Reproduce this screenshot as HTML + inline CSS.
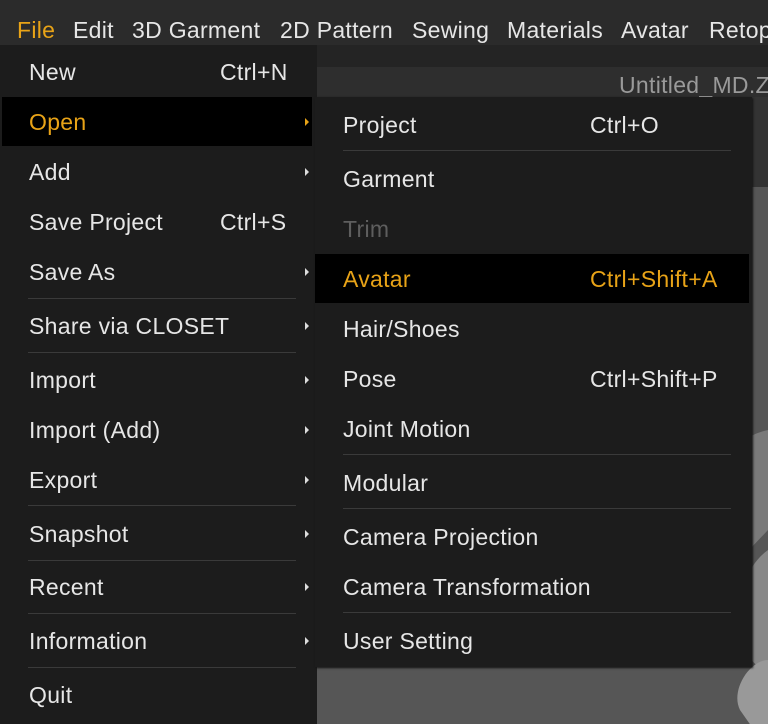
<!DOCTYPE html>
<html><head><meta charset="utf-8"><style>
html,body{margin:0;width:768px;height:724px;overflow:hidden}
body{background:#565656;font-family:"Liberation Sans",sans-serif;position:relative}
.a{position:absolute}
.t{position:absolute;font-size:23px;color:#e6e6e6;line-height:26px;white-space:nowrap;letter-spacing:0.3px}
.o{color:#e8a317}
.sep{position:absolute;height:1px;background:#3a3a3a}
.ar{position:absolute;width:0;height:0;border-left:4px solid #ddd;border-top:4px solid transparent;border-bottom:4px solid transparent}
</style></head><body>
<div class="a" style="left:0;top:0;width:768px;height:45px;background:#2b2b2b"></div>
<div class="a" style="left:0;top:45px;width:768px;height:22px;background:#242424"></div>
<div class="a" style="left:0;top:67px;width:768px;height:30px;background:#2e2e2e"></div>
<div class="a" style="left:740px;top:97px;width:28px;height:90px;background:#333"></div>
<svg class="a" style="left:700px;top:190px" width="68" height="534"><path d="M68 360 C40 380 30 430 45 460 C55 480 68 480 68 480Z" fill="#888"/><path d="M68 560 L40 520 C30 500 50 470 68 470Z" fill="#999"/><path d="M30 380 C15 300 20 250 68 240 L68 340Z" fill="#7a7a7a"/></svg>
<div class="a" style="left:0;top:0;width:768px;height:45px;overflow:hidden">
<div class="t o" style="left:17px;top:17px">File</div>
<div class="t" style="left:73px;top:17px">Edit</div>
<div class="t" style="left:132px;top:17px">3D Garment</div>
<div class="t" style="left:280px;top:17px">2D Pattern</div>
<div class="t" style="left:412px;top:17px">Sewing</div>
<div class="t" style="left:507px;top:17px">Materials</div>
<div class="t" style="left:621px;top:17px">Avatar</div>
<div class="t" style="left:709px;top:17px">Retop</div>
</div>
<div class="a" style="left:0;top:60px;width:768px;height:37px;overflow:hidden">
<div class="t" style="left:619px;top:12px;color:#9a9a9a">Untitled_MD.ZP</div>
</div>

<div class="a" style="left:0;top:45px;width:317px;height:679px;background:#1c1c1c"></div>
<div class="a" style="left:2px;top:97px;width:310px;height:49px;background:#000"></div>
<div class="t" style="left:29px;top:59px">New</div><div class="t" style="left:220px;top:59px">Ctrl+N</div>
<div class="t o" style="left:29px;top:109px">Open</div>
<div class="t" style="left:29px;top:159px">Add</div>
<div class="t" style="left:29px;top:209px">Save Project</div><div class="t" style="left:220px;top:209px">Ctrl+S</div>
<div class="t" style="left:29px;top:259px">Save As</div>
<div class="sep" style="left:28px;top:298px;width:268px"></div>
<div class="t" style="left:29px;top:313px">Share via CLOSET</div>
<div class="sep" style="left:28px;top:352px;width:268px"></div>
<div class="t" style="left:29px;top:367px">Import</div>
<div class="t" style="left:29px;top:417px">Import (Add)</div>
<div class="t" style="left:29px;top:467px">Export</div>
<div class="sep" style="left:28px;top:505px;width:268px"></div>
<div class="t" style="left:29px;top:521px">Snapshot</div>
<div class="sep" style="left:28px;top:560px;width:268px"></div>
<div class="t" style="left:29px;top:574px">Recent</div>
<div class="sep" style="left:28px;top:613px;width:268px"></div>
<div class="t" style="left:29px;top:628px">Information</div>
<div class="sep" style="left:28px;top:667px;width:268px"></div>
<div class="t" style="left:29px;top:682px">Quit</div>
<div class="ar" style="left:305px;top:118px;border-left-color:#e8a317"></div>
<div class="ar" style="left:305px;top:168px"></div>
<div class="ar" style="left:305px;top:268px"></div>
<div class="ar" style="left:305px;top:322px"></div>
<div class="ar" style="left:305px;top:376px"></div>
<div class="ar" style="left:305px;top:426px"></div>
<div class="ar" style="left:305px;top:476px"></div>
<div class="ar" style="left:305px;top:530px"></div>
<div class="ar" style="left:305px;top:583px"></div>
<div class="ar" style="left:305px;top:637px"></div>

<div class="a" style="left:315px;top:97px;width:437px;height:570px;background:#1c1c1c;box-shadow:1px 1px 2px #111"></div>
<div class="a" style="left:315px;top:254px;width:434px;height:49px;background:#000"></div>
<div class="t" style="left:343px;top:112px">Project</div><div class="t" style="left:590px;top:112px">Ctrl+O</div>
<div class="sep" style="left:343px;top:150px;width:388px"></div>
<div class="t" style="left:343px;top:166px">Garment</div>
<div class="t" style="left:343px;top:216px;color:#5e5e5e">Trim</div>
<div class="t o" style="left:343px;top:266px">Avatar</div><div class="t o" style="left:590px;top:266px">Ctrl+Shift+A</div>
<div class="t" style="left:343px;top:316px">Hair/Shoes</div>
<div class="t" style="left:343px;top:366px">Pose</div><div class="t" style="left:590px;top:366px">Ctrl+Shift+P</div>
<div class="t" style="left:343px;top:416px">Joint Motion</div>
<div class="sep" style="left:343px;top:454px;width:388px"></div>
<div class="t" style="left:343px;top:470px">Modular</div>
<div class="sep" style="left:343px;top:508px;width:388px"></div>
<div class="t" style="left:343px;top:524px">Camera Projection</div>
<div class="t" style="left:343px;top:574px">Camera Transformation</div>
<div class="sep" style="left:343px;top:612px;width:388px"></div>
<div class="t" style="left:343px;top:628px">User Setting</div>
</body></html>
